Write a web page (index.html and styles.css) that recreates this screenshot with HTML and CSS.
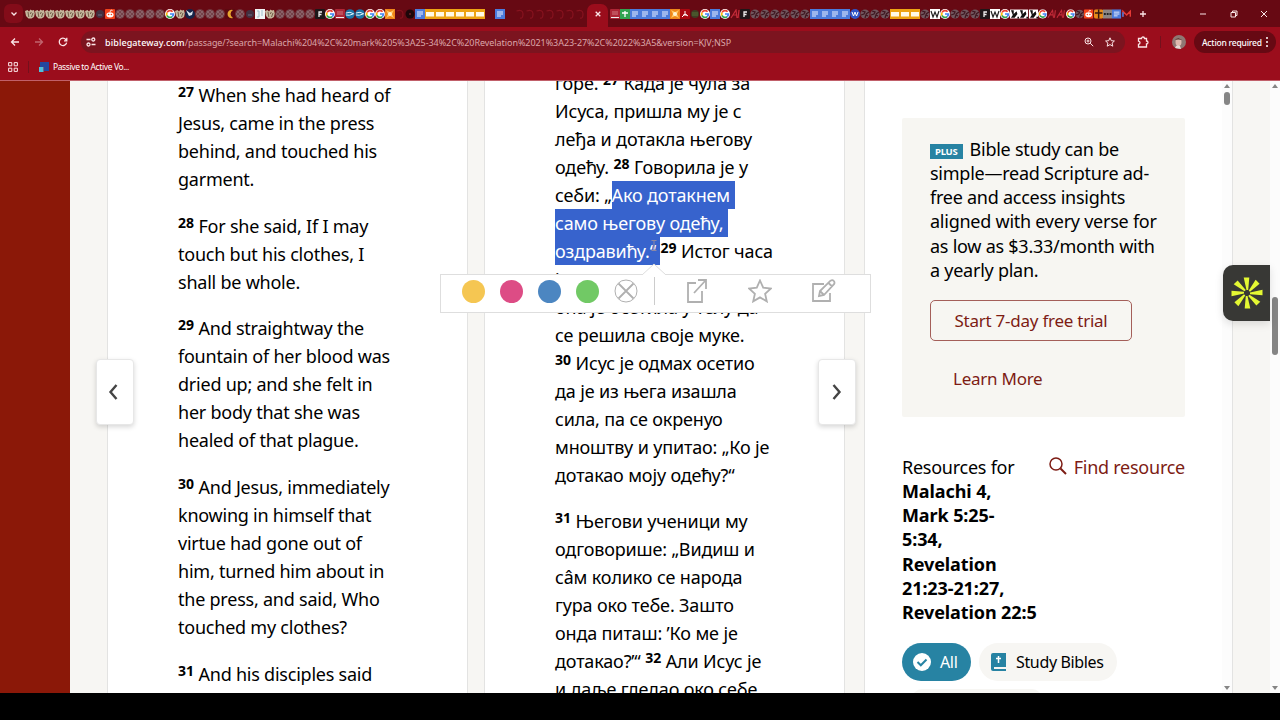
FILE: index.html
```html
<!DOCTYPE html>
<html lang="en">
<head>
    <meta charset="UTF-8">
    <meta name="viewport" content="width=device-width, initial-scale=1.0">
    <title>Bible Gateway passage</title>
    <link rel="stylesheet" href="styles.css">
</head>
<body>
    <!-- Favicon symbols -->
    <svg class="symbols" width="0" height="0">
        <symbol id="leaf" viewBox="0 0 10 10"><path d="M0 2l2.500-1L4 2.500 5.500.5 7 1.500 9 1l.8 3.500L9 8l-2.500 1.500L3.500 9.500 1 7z" fill="#c4b59b"/><path d="M3 3l.8 5M6.300 3l-1 2M8 4L6.500 8" stroke="#5b4634" stroke-width=".8" fill="none"/></symbol>
        <symbol id="blob" viewBox="0 0 10 10"><circle cx="5" cy="5" r="4" fill="#43303f"/><path d="M3 6h4" stroke="#6b6b85"/></symbol>
        <symbol id="reddit" viewBox="0 0 10 10"><rect width="10" height="10" rx="1" fill="#f2431b"/><ellipse cx="5" cy="5.800" rx="3.600" ry="2.600" fill="#fff"/><circle cx="3.600" cy="5.500" r=".8" fill="#f2431b"/><circle cx="6.400" cy="5.500" r=".8" fill="#f2431b"/><path d="M5 3l1-2 1.500.5" stroke="#fff" stroke-width=".8" fill="none"/></symbol>
        <symbol id="mesh" viewBox="0 0 10 10"><circle cx="5" cy="5" r="4.800" fill="#75434a"/><path d="M2 2l6 6M1 5l4 4M5 1l4 4M8 2L2 8M5 1L1 5M9 5L5 9" stroke="#97757a" stroke-width=".6"/></symbol>
        <symbol id="globe" viewBox="0 0 10 10"><circle cx="5" cy="5" r="4.600" fill="#70565d"/><path d="M2 2l3 1-1 2-3 1M6 5l3-2M5 9l1-3 2 1" stroke="#3f1820" stroke-width="1.300" fill="none"/></symbol>
        <symbol id="google" viewBox="0 0 10 10"><circle cx="5" cy="5" r="5" fill="#fff"/><g fill="none" stroke-width="1.700"><path d="M7.600 2.700A3.400 3.400 0 0 0 2 3.500" stroke="#ea4335"/><path d="M2 3.500a3.400 3.400 0 0 0 0 3" stroke="#fbbc05"/><path d="M2 6.500a3.400 3.400 0 0 0 5.200 1.100" stroke="#34a853"/><path d="M7.200 7.600A3.300 3.300 0 0 0 8.400 5H5" stroke="#4285f4"/></g></symbol>
        <symbol id="bird" viewBox="0 0 10 10"><circle cx="5" cy="5" r="5" fill="#16254a"/><path d="M1 1l4 3 3-2-1 4-3 1z" fill="#dde5ee"/></symbol>
        <symbol id="moon" viewBox="0 0 10 10"><rect width="10" height="10" fill="#5c0910"/><path d="M8 1A4.200 4.200 0 1 0 8 9 4.500 4.500 0 0 1 8 1z" fill="#e6a52f"/></symbol>
        <symbol id="sheet" viewBox="0 0 10 10"><rect width="10" height="10" fill="#f0f4f4"/><path d="M2 2h2v6H2M6 2h2M6 4h2M6 6h2" stroke="#9fc0ca" fill="none"/></symbol>
        <symbol id="black" viewBox="0 0 10 10"><rect width="10" height="10" rx="1" fill="#1d1719"/><path d="M4 8V3h3M4 5.500h2.500" stroke="#eee" stroke-width="1.300" fill="none"/></symbol>
        <symbol id="redtile" viewBox="0 0 10 10"><rect width="10" height="10" rx="1" fill="#ad2635"/><path d="M2 3h6M2 5h6" stroke="#d99096" stroke-width=".8"/><path d="M1 8.500h8" stroke="#eee"/></symbol>
        <symbol id="fish" viewBox="0 0 10 10"><circle cx="5" cy="5" r="4.800" fill="#1c75a8"/><path d="M1 4q4-2 8 1M1 6q3 1 7-1" stroke="#e3f1f5" fill="none"/></symbol>
        <symbol id="star" viewBox="0 0 10 10"><rect width="10" height="10" fill="#ee8619"/><path d="M1 1l4 2 4-2-2 4 2 4-4-2-4 2 2-4z" fill="#ffc75f"/><circle cx="5" cy="5" r="2" fill="#fff2cf"/></symbol>
        <symbol id="dot" viewBox="0 0 10 10"><circle cx="5" cy="5" r="4.500" fill="#1d0609"/><circle cx="5" cy="5" r="1" fill="#72202a"/></symbol>
        <symbol id="docs" viewBox="0 0 10 10"><path d="M0 0h10v10H0z" fill="#4b7bdc"/><path d="M2 3h6M2 5h6M2 7h4" stroke="#eef3ff"/></symbol>
        <symbol id="slides" viewBox="0 0 10 10"><path d="M0 0h10v10H0z" fill="#eea414"/><path d="M1 3h8v4.500H1z" fill="#fffbe8"/></symbol>
        <symbol id="sheets" viewBox="0 0 10 10"><path d="M0 0h10v10H0z" fill="#32a350"/><path d="M2 4h6M5 2v6" stroke="#fff" stroke-width="1.300"/></symbol>
        <symbol id="arc" viewBox="0 0 10 10"><path d="M1.500 2Q8 0 8 5T5 9" stroke="#87131f" fill="none" stroke-width="1.200"/></symbol>
        <symbol id="adobe" viewBox="0 0 10 10"><rect width="10" height="10" rx="1" fill="#ab0710"/><path d="M5 2v3L2 8M5 5l3 2M3 6h4" stroke="#fff" fill="none"/></symbol>
        <symbol id="green" viewBox="0 0 10 10"><circle cx="5" cy="5" r="4" fill="#3f3d23"/><path d="M2 4h6M2 6h6" stroke="#547036"/></symbol>
        <symbol id="reda" viewBox="0 0 10 10"><path d="M1 9L6 1l1 8M3 6h4M8 9l1-8" stroke="#c42b39" stroke-width="1.200" fill="none"/></symbol>
        <symbol id="word" viewBox="0 0 10 10"><circle cx="5" cy="5" r="5" fill="#3154c8"/><path d="M2 3l1.500 4L5 3l1.500 4L8 3" stroke="#fff" fill="none"/></symbol>
        <symbol id="wiki" viewBox="0 0 10 10"><rect width="10" height="10" fill="#fff"/><path d="M1 2l2 6 2-5 2 5 2-6" stroke="#222" fill="none" stroke-width="1.200"/></symbol>
        <symbol id="ink" viewBox="0 0 10 10"><rect width="10" height="10" fill="#fff"/><path d="M1 1h3v4l3-3 1 3-3 4H1l2-3zM8 8h2v2H8z" fill="#111"/></symbol>
        <symbol id="cross" viewBox="0 0 10 10"><rect width="10" height="10" rx="2" fill="#e78a19"/><path d="M5 0v10M1 4h8" stroke="#331812" stroke-width="1.600"/></symbol>
        <symbol id="mask" viewBox="0 0 10 10"><rect width="10" height="10" fill="#8d8685"/><path d="M1 4h8v2H1z" fill="#222"/><path d="M3 5h1M6 5h1" stroke="#fff"/></symbol>
        <symbol id="gmail" viewBox="0 0 10 10"><path d="M1 8V2l4 4 4-4v6" stroke="#e53935" stroke-width="1.600" fill="none"/><path d="M1 8V3" stroke="#3878df" stroke-width="1.600"/></symbol>
        <symbol id="none" viewBox="0 0 10 10"></symbol>
    </svg>

    <!-- Browser chrome -->
    <header class="browser">
        <div class="tab-strip">
            <div class="tab-search"><svg width="8" height="6" viewBox="0 0 8 6"><path d="M1.500 1.500L4 4l2.500-2.500" class="line"/></svg></div>
            <div class="icons" id="tabs-left"></div>
            <div class="active-tab"><svg width="6" height="6" viewBox="0 0 6 6"><path d="M.7.7l4.600 4.600M5.300.7L.7 5.300" class="line"/></svg></div>
            <div class="icons" id="tabs-right"></div>
            <div class="icons tight" id="tabs-end"></div>
            <svg class="new-tab" width="8" height="8" viewBox="0 0 8 8"><path d="M4 1v6M1 4h6" class="line"/></svg>
            <div class="window-buttons">
                <svg width="8" height="8" viewBox="0 0 8 8"><path d="M1 4h6" class="line thin"/></svg>
                <svg width="8" height="8" viewBox="0 0 8 8"><path d="M1 2.500h4.500V7H1zM2.500 2.500V1H7v4.500H5.500" class="line thin"/></svg>
                <svg width="8" height="8" viewBox="0 0 8 8"><path d="M1 1l6 6M7 1L1 7" class="line thin"/></svg>
            </div>
        </div>
        <div class="toolbar">
            <div class="nav-icons">
                <svg width="10" height="10" viewBox="0 0 10 10"><path d="M9 5H1.500M5 1.500L1.500 5 5 8.500" class="line"/></svg>
                <svg class="dim" width="10" height="10" viewBox="0 0 10 10"><path d="M1 5h7.500M5 1.500L8.500 5 5 8.500" class="line"/></svg>
                <svg width="10" height="10" viewBox="0 0 10 10"><path d="M8.600 5.600A3.700 3.700 0 1 1 7.800 2.500L8.700 3.500M8.800.8v3H6" class="line"/></svg>
            </div>
            <div class="address">
                <svg width="10" height="10" viewBox="0 0 10 10"><path d="M0.500 2.500h4M5.500 7.500h4" class="line"/><circle cx="7.300" cy="2.500" r="1.500" class="line"/><circle cx="2.500" cy="7.500" r="1.500" class="line"/></svg>
                <span class="url"><b>biblegateway.com</b>/passage/?search=Malachi%204%2C%20mark%205%3A25-34%2C%20Revelation%2021%3A23-27%2C%2022%3A5&amp;version=KJV;NSP</span>
                <svg width="10" height="10" viewBox="0 0 10 10"><circle cx="4" cy="4" r="3" class="line thin"/><path d="M6.200 6.200L9.200 9.200M2.500 4h3M4 2.500v3" class="line thin"/></svg>
                <svg width="10" height="10" viewBox="0 0 10 10"><path d="M5 .8l1.300 2.900 3.100.3-2.300 2.100.7 3.100L5 7.600 2.200 9.200l.7-3.100L.6 4l3.100-.3z" class="line thin"/></svg>
            </div>
            <svg class="puzzle" width="12" height="12" viewBox="0 0 12 12"><path d="M1.500 2.500H4.500C4.500.5 7.500.5 7.500 2.500H9.500V5C11.500 5 11.500 8 9.500 8v3h-8V8.300C3.500 8 3.500 5.500 1.500 5.200z" class="line"/></svg>
            <div class="separator"></div>
            <svg class="avatar" width="14" height="14" viewBox="0 0 14 14"><circle cx="7" cy="7" r="7" fill="#8f7773"/><ellipse cx="6.500" cy="7" rx="3" ry="4" fill="#dfb9ae"/><path d="M3 13q1-4 5-2l1 3z" fill="#e8d9d5"/><path d="M3 5q3-4 7 0-4-1-7 0z" fill="#5a3c37"/></svg>
            <div class="action">Action required
                <svg width="4" height="12" viewBox="0 0 4 12"><g fill="#fff"><circle cx="2" cy="2" r="1"/><circle cx="2" cy="6" r="1"/><circle cx="2" cy="10" r="1"/></g></svg>
            </div>
        </div>
        <div class="bookmarks">
            <svg width="10" height="10" viewBox="0 0 10 10"><path d="M.6.6h3.200v3.200H.6zM6.200.6h3.200v3.200H6.200zM.6 6.200h3.200v3.200H.6zM6.200 6.200h3.200v3.200H6.200z" class="line thin"/></svg>
            <div class="separator"></div>
            <svg width="10" height="10" viewBox="0 0 10 10"><path d="M1 0h9v9H5V5H1z" fill="#24479f"/><path d="M0 5h4.500v5H0z" fill="#4fc0dd"/></svg>
            <span>Passive to Active Vo...</span>
        </div>
    </header>

    <!-- Passage page -->
    <main class="page">
        <div class="side-ad"></div>
        <section class="column kjv">
            <p><sup>27</sup> When she had heard of<br>Jesus, came in the press<br>behind, and touched his<br>garment.</p>
            <p><sup>28</sup> For she said, If I may<br>touch but his clothes, I<br>shall be whole.</p>
            <p><sup>29</sup> And straightway the<br>fountain of her blood was<br>dried up; and she felt in<br>her body that she was<br>healed of that plague.</p>
            <p><sup>30</sup> And Jesus, immediately<br>knowing in himself that<br>virtue had gone out of<br>him, turned him about in<br>the press, and said, Who<br>touched my clothes?</p>
            <p><sup>31</sup> And his disciples said</p>
        </section>
        <section class="column nsp" lang="sr">
            <p>горе. <sup>27</sup> Када је чула за<br>Исуса, пришла му је с<br>леђа и дотакла његову<br>одећу. <sup>28</sup> Говорила је у<br>себи: „<mark>Ако дотакнем </mark><br><mark>само његову одећу, </mark><br><mark>оздравићу.“ </mark><sup>29</sup> Истог часа<br>је престало и<br>она је осетила у телу да<br>се решила своје муке.<br><sup>30</sup> Исус је одмах осетио<br>да је из њега изашла<br>сила, па се окренуо<br>мноштву и упитао: „Ко је<br>дотакао моју одећу?“</p>
            <p><sup>31</sup> Његови ученици му<br>одговорише: „Видиш и<br>са̂м колико се народа<br>гура око тебе. Зашто<br>онда питаш: ’Ко ме је<br>дотакао?’“ <sup>32</sup> Али Исус је<br>и даље гледао око себе</p>
        </section>
        <aside class="resources">
            <div class="promo">
                <p><span class="plus">PLUS</span>Bible study can be<br>simple—read Scripture ad-<br>free and access insights<br>aligned with every verse for<br>as low as $3.33/month with<br>a yearly plan.</p>
                <a class="trial">Start 7-day free trial</a>
                <a class="learn">Learn More</a>
            </div>
            <div class="resource-head">
                <div>Resources for<br><b>Malachi 4,<br>Mark 5:25-<br>5:34,<br>Revelation<br>21:23-21:27,<br>Revelation 22:5</b></div>
                <a class="find"><svg width="18" height="18" viewBox="0 0 18 18"><circle cx="7" cy="7" r="6" fill="none" stroke="#7d1c14" stroke-width="1.500"/><path d="M11.500 11.500L17 17" stroke="#7d1c14" stroke-width="2"/></svg>Find resource</a>
            </div>
            <div class="filters">
                <div class="chip selected"><svg width="18" height="18" viewBox="0 0 18 18"><circle cx="9" cy="9" r="9" fill="#fff"/><path d="M4.500 9l3.300 3.300L13.500 6.500" fill="none" stroke="#2783a3" stroke-width="2"/></svg>All</div>
                <div class="chip"><svg width="15" height="18" viewBox="0 0 15 18"><path d="M2 0h13v14H3v2h12v2H2q-2 0-2-2V2q0-2 2-2z" fill="#2783a3"/><path d="M7.500 3v7M5 5.500h5" stroke="#fff" stroke-width="1.500"/></svg>Study Bibles</div>
            </div>
            <div class="next-chip"></div>
            <div class="scrollbar inner"><i class="up"></i><i class="thumb"></i><i class="down"></i></div>
        </aside>
        <div class="scrollbar outer"><i class="up"></i><i class="thumb"></i><i class="down"></i></div>

        <!-- Overlays -->
        <div class="arrow prev"><svg width="12" height="18" viewBox="0 0 12 18"><path d="M9.500 2L3.500 9l6 7" class="chevron"/></svg></div>
        <div class="arrow next"><svg width="12" height="18" viewBox="0 0 12 18"><path d="M2.500 2L8.500 9l-6 7" class="chevron"/></svg></div>
        <div class="highlight-menu">
            <svg class="pointer" width="24" height="12" viewBox="0 0 24 12"><path d="M0 12L12 1l12 11" fill="#fff" stroke="#ddd"/></svg>
            <span class="color yellow"></span>
            <span class="color pink"></span>
            <span class="color blue"></span>
            <span class="color green"></span>
            <svg width="24" height="24" viewBox="0 0 24 24"><circle cx="12" cy="12" r="11" class="tool fine"/><path d="M4.500 4.500l15 15M19.500 4.500l-15 15" class="tool"/></svg>
            <span class="divider"></span>
            <div class="tools">
                <svg width="20" height="24" viewBox="0 0 20 24"><path d="M9 4H1v19h14V12M7 14L18.500 1.500M11 1h8v9" class="tool"/></svg>
                <svg width="24" height="24" viewBox="0 0 24 24"><path d="M12 1.500l3.200 7.200 7.800.8-5.900 5.200 1.700 7.700-6.800-4-6.800 4 1.700-7.700L1 9.500l7.800-.8z" class="tool"/></svg>
                <svg width="24" height="24" viewBox="0 0 24 24"><path d="M12 5H1v17h17v-8M7 17l1-5L18.500 1.700q2-1.200 3.300.3t.2 3.200L12 16zM16.500 4l3.700 3.500M8 12l4 4" class="tool"/></svg>
            </div>
        </div>
        <svg class="cursor" width="6" height="11" viewBox="0 0 6 11"><path d="M.5.5h5M3 .5v10M.5 10.500h5" stroke="#8d88a4" fill="none"/></svg>
        <div class="assistant">
            <svg width="32" height="32" viewBox="-16 -16 32 32">
                <g fill="#e4f833">
                    <path id="ray" d="M-3.300-15.500h5.600L1.200-3-.5-3z"/>
                    <use href="#ray" transform="rotate(45)"/><use href="#ray" transform="rotate(90)"/><use href="#ray" transform="rotate(135)"/><use href="#ray" transform="rotate(180)"/><use href="#ray" transform="rotate(225)"/><use href="#ray" transform="rotate(270)"/><use href="#ray" transform="rotate(315)"/>
                </g>
            </svg>
        </div>
    </main>

    <script>
        // name or name*count, in tab order
        const tabs = {
            'tabs-left': 'leaf*7 blob reddit mesh*5 google leaf bird mesh*3 moon mesh blob sheet leaf mesh*4 black google redtile fish*2 google*2 star arc dot docs slides*6 none docs none arc*7',
            'tabs-right': 'redtile sheets docs*4 star adobe green google docs google reda black globe*6 docs*4 word globe*3 slides*3 globe wiki google globe*3 black wiki google',
            'tabs-end': 'ink*3 google reda*2 google globe reddit cross mask docs gmail'
        };

        Object.entries(tabs).forEach(([id, list]) => {
            document.getElementById(id).innerHTML = list.split(' ').map(item => {
                const [name, count] = item.split('*');
                return `<svg viewBox="0 0 10 10"><use href="#${name}"/></svg>`.repeat(count || 1);
            }).join('');
        });
    </script>
</body>
</html>
```
FILE: styles.css
```css
* {
    box-sizing: border-box;
}

body {
    margin: 0;
    width: 1280px;
    height: 720px;
    overflow: hidden;
    background-color: #000;
    color: #000;
    font-family: "Noto Sans", "Open Sans", sans-serif;
}

svg {
    display: block;
    flex: none;
}

.symbols {
    position: absolute;
}

.line {
    fill: none;
    stroke: #fbe5e7;
    stroke-width: 1.3;
}

.line.thin {
    stroke-width: 1;
}

/* Browser chrome */
.browser {
    height: 81px;
    background-color: #9b0d1c;
    border-bottom: 1px solid #c1606a;
    color: #fff;
}

.tab-strip {
    display: flex;
    align-items: center;
    height: 27px;
    background-color: #670913;
}

.tab-search {
    display: flex;
    flex: none;
    align-items: center;
    justify-content: center;
    width: 19px;
    height: 19px;
    margin: 0 2px 0 4px;
    border-radius: 6px;
    background-color: #830c19;
}

.icons {
    display: flex;
    flex: none;
}

.icons svg {
    width: 10px;
    height: 10px;
}

#tabs-left {
    width: 562px;
}

.icons.tight svg {
    width: 9.3px;
}

.active-tab {
    display: flex;
    flex: none;
    align-items: center;
    justify-content: center;
    align-self: flex-end;
    width: 21px;
    height: 23px;
    margin-right: 2px;
    padding-bottom: 4px;
    border-radius: 7px 7px 0 0;
    background-color: #9b0d1c;
}

.new-tab {
    margin-left: 8px;
}

.window-buttons {
    display: flex;
    gap: 22.5px;
    margin: 0 12px 0 auto;
}

.toolbar {
    display: flex;
    align-items: center;
    height: 30px;
    padding-right: 4px;
}

.nav-icons {
    display: flex;
    flex: none;
    gap: 14px;
    width: 81px;
    padding-left: 10px;
}

.dim {
    opacity: 0.4;
}

.address {
    display: flex;
    flex: none;
    align-items: center;
    gap: 11px;
    width: 1044px;
    height: 22px;
    padding: 0 10px 0 5px;
    border-radius: 11px;
    background-color: #7c141f;
}

.url {
    flex: 1;
    margin-left: -2px;
    color: #dba6aa;
    font-size: 9px;
    letter-spacing: -0.06px;
}

.url b {
    color: #fff;
    font-weight: 500;
    letter-spacing: 0.1px;
}

.puzzle {
    margin-left: 12px;
}

.separator {
    width: 1px;
    height: 12px;
    margin: 0 11px;
    background-color: #74101c;
}

.action {
    display: flex;
    align-items: center;
    gap: 3px;
    width: 82px;
    height: 22px;
    margin-left: auto;
    padding-left: 8px;
    border-radius: 11px;
    background-color: #670913;
    font-size: 8.5px;
    font-weight: 500;
    letter-spacing: -0.2px;
    white-space: nowrap;
}

.bookmarks {
    display: flex;
    align-items: center;
    height: 19px;
    padding-left: 8px;
    font-size: 8.5px;
    letter-spacing: -0.4px;
}

.bookmarks .separator {
    margin: 0 10px;
}

.bookmarks span {
    margin-left: 4px;
}

/* Page */
.page {
    position: relative;
    display: grid;
    grid-template-columns: 70px 37px 361px 16px 361px 19px 369px 37px 10px;
    height: 612px;
    overflow: hidden;
    background-color: #f7f6f3;
    font-size: 18px;
    line-height: 28px;
    white-space: nowrap;
}

.side-ad {
    background-color: #8b1808;
}

.column,
.resources {
    height: 612px;
    overflow: hidden;
    border: 1px solid #e3e3e2;
    border-width: 0 1px;
    background-color: #fff;
}

.column {
    padding-left: 70px;
}

.column p {
    margin: 0 0 18.7px;
}

.kjv {
    grid-column: 3;
    letter-spacing: -0.23px;
}

.nsp {
    grid-column: 5;
    letter-spacing: -0.15px;
}

.nsp p:first-child {
    margin-top: -12.4px;
}

sup {
    position: relative;
    top: -5px;
    font-size: 14px;
    font-weight: 700;
    letter-spacing: 0;
    line-height: 0;
    vertical-align: baseline;
}

mark {
    display: inline-block;
    height: 28px;
    background-color: #3763cd;
    color: #fff;
    vertical-align: top;
    white-space: pre;
}

/* Resources */
.resources {
    position: relative;
    grid-column: 7;
    padding: 37px 47px 0 37px;
    letter-spacing: -0.25px;
    line-height: 24.3px;
}

.resources b {
    letter-spacing: -0.1px;
}

.promo {
    height: 299px;
    padding: 18.6px 28px;
    border-radius: 2px;
    background-color: #f7f6f2;
}

.promo p {
    margin: 0 0 17.6px;
}

.plus {
    position: relative;
    top: -1px;
    display: inline-block;
    height: 15px;
    margin-right: 7px;
    padding: 0 5px;
    background-color: #2783a3;
    color: #fff;
    font-size: 9.5px;
    font-weight: 700;
    line-height: 15px;
}

.promo a,
.find {
    color: #7d1c14;
}

.trial {
    display: block;
    width: 202px;
    height: 41px;
    border: 1px solid #a45f59;
    border-radius: 5px;
    font-size: 17px;
    line-height: 39px;
    text-align: center;
}

.learn {
    display: block;
    margin: 26px 0 0 23px;
    font-size: 17px;
}

.resource-head {
    display: flex;
    justify-content: space-between;
    margin-top: 37.6px;
}

.find {
    display: flex;
    align-items: flex-start;
    gap: 7px;
}

.find svg {
    margin-top: 2px;
}

.filters {
    display: flex;
    gap: 8px;
    margin-top: 18px;
}

.chip {
    display: flex;
    align-items: center;
    gap: 10px;
    width: 138px;
    height: 38px;
    padding-left: 12px;
    border-radius: 19px;
    background-color: #f7f6f3;
    font-size: 16px;
    letter-spacing: -0.35px;
}

.chip.selected {
    width: 69px;
    padding-left: 11px;
    gap: 9px;
    background-color: #2783a3;
    color: #fff;
}

.next-chip {
    width: 130px;
    height: 10px;
    margin: 8px 0 0 10px;
    border-radius: 10px 10px 0 0;
    background-color: #f7f6f3;
}

/* Scrollbars */
.scrollbar {
    display: flex;
    flex-direction: column;
    align-items: center;
    width: 10px;
    height: 612px;
    padding: 3px 0;
    background-color: #fcfcfc;
}

.scrollbar.inner {
    position: absolute;
    top: 0;
    right: 0;
}

.scrollbar.outer {
    grid-column: 9;
}

.up,
.down {
    border: 3px solid transparent;
    border-top-width: 0;
    border-bottom: 4px solid #858585;
}

.down {
    margin-top: auto;
    border-top: 4px solid #858585;
    border-bottom-width: 0;
}

.thumb {
    width: 6px;
    height: 13px;
    margin-top: 4px;
    border-radius: 3px;
    background-color: #858585;
}

.outer .thumb {
    height: 58px;
    margin-top: 209px;
}

/* Overlays */
.arrow {
    position: absolute;
    top: 278px;
    display: flex;
    align-items: center;
    justify-content: center;
    width: 38px;
    height: 66px;
    border: 1px solid #e7e7e7;
    border-radius: 4px;
    background-color: #fff;
    box-shadow: 0 2px 5px rgba(0, 0, 0, 0.16);
}

.prev {
    left: 96px;
    padding-right: 4px;
}

.next {
    left: 818px;
}

.chevron {
    fill: none;
    stroke: #444;
    stroke-width: 2.4;
}

.highlight-menu {
    position: absolute;
    top: 193px;
    left: 440px;
    display: flex;
    align-items: center;
    gap: 15px;
    width: 431px;
    height: 39px;
    padding: 0 34px 5px 21px;
    border: 1px solid #dedede;
    background-color: #fff;
}

.pointer {
    position: absolute;
    top: -12px;
    left: 201px;
}

.color {
    width: 23px;
    height: 23px;
    border-radius: 50%;
}

.yellow {
    background-color: #f5c652;
}

.pink {
    background-color: #dd4c85;
}

.blue {
    background-color: #4c86c1;
}

.green {
    background-color: #71c965;
}

.divider {
    width: 1px;
    height: 28px;
    margin-left: 1px;
    background-color: #ccc;
}

.tools {
    display: flex;
    flex: 1;
    justify-content: space-between;
    padding-left: 17px;
}

.tool {
    fill: none;
    stroke: #b0b0b0;
    stroke-width: 1.8;
}

.tool.fine {
    stroke-width: 1;
}

.cursor {
    position: absolute;
    top: 159px;
    left: 651px;
}

.assistant {
    position: absolute;
    top: 184px;
    left: 1223px;
    display: flex;
    align-items: center;
    justify-content: center;
    width: 47px;
    height: 56px;
    border-radius: 10px 0 0 10px;
    background-color: #383835;
    box-shadow: 0 3px 8px rgba(0, 0, 0, 0.12);
}
```
